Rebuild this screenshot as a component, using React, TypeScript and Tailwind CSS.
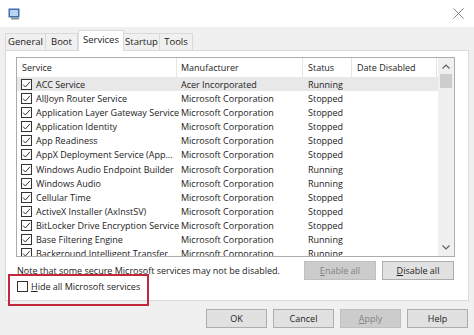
import React from "react";

const services = [
  ["ACC Service", "Acer Incorporated", "Running"],
  ["AllJoyn Router Service", "Microsoft Corporation", "Stopped"],
  ["Application Layer Gateway Service", "Microsoft Corporation", "Stopped"],
  ["Application Identity", "Microsoft Corporation", "Stopped"],
  ["App Readiness", "Microsoft Corporation", "Stopped"],
  ["AppX Deployment Service (App...", "Microsoft Corporation", "Stopped"],
  ["Windows Audio Endpoint Builder", "Microsoft Corporation", "Running"],
  ["Windows Audio", "Microsoft Corporation", "Running"],
  ["Cellular Time", "Microsoft Corporation", "Stopped"],
  ["ActiveX Installer (AxInstSV)", "Microsoft Corporation", "Stopped"],
  ["BitLocker Drive Encryption Service", "Microsoft Corporation", "Stopped"],
  ["Base Filtering Engine", "Microsoft Corporation", "Running"],
  ["Background Intelligent Transfer ...", "Microsoft Corporation", "Running"],
];

const tabs = [
  { label: "General", w: "w-[41px]" },
  { label: "Boot", w: "w-[33px]" },
  { label: "Services", w: "w-[46px]", active: true },
  { label: "Startup", w: "w-[37px]" },
  { label: "Tools", w: "w-[34px]" },
];

function CheckBox({ checked }: { checked?: boolean }) {
  return (
    <div className="flex h-[11px] w-[11px] shrink-0 items-center justify-center border border-[#333] bg-white">
      {checked && (
        <svg width="9" height="9" viewBox="0 0 9 9" fill="none">
          <path d="M1 4.6 L3.4 7 L8 1.8" stroke="#333" strokeWidth="1" />
        </svg>
      )}
    </div>
  );
}

function Button({
  children,
  disabled,
  className = "",
}: {
  children: React.ReactNode;
  disabled?: boolean;
  className?: string;
}) {
  return (
    <div
      className={`flex h-[19px] items-center justify-center border ${
        disabled
          ? "border-[#bfbfbf] bg-[#cccccc] text-[#838383]"
          : "border-[#adadad] bg-[#e1e1e1] text-[#222]"
      } ${className}`}
    >
      {children}
    </div>
  );
}

export default function App() {
  return (
    <div className="relative h-[335px] w-[474px] overflow-hidden bg-[#f0f0f0] font-['Open_Sans',sans-serif] text-[9px] leading-none text-[#222]">
      {/* title bar */}
      <div className="flex h-[27px] items-center justify-between bg-white pl-[8px] pr-[10px]">
        <svg width="12" height="12" viewBox="0 0 12 12">
          <rect x="0.5" y="0.5" width="11" height="9" fill="#3d6fb0" />
          <rect x="2" y="2" width="8" height="6" fill="#b9d4f0" />
          <rect x="3" y="9.5" width="8" height="2" fill="#8a8f96" />
        </svg>
        <svg width="11" height="11" viewBox="0 0 11 11">
          <path d="M0.5 0.5 L10.5 10.5 M10.5 0.5 L0.5 10.5" stroke="#777" strokeWidth="0.9" />
        </svg>
      </div>

      {/* tabs */}
      <div className="flex h-[23px] items-end pl-[5px] text-[9.5px]">
        {tabs.map((t) =>
          t.active ? (
            <div
              key={t.label}
              className={`relative z-10 -mb-px flex h-[21px] items-center justify-center border border-b-0 border-[#d9d9d9] bg-white pb-[2px] ${t.w}`}
            >
              {t.label}
            </div>
          ) : (
            <div
              key={t.label}
              className={`-ml-px flex h-[17px] items-center justify-center border border-b-0 border-[#d9d9d9] bg-[#f0f0f0] first:ml-0 ${t.w}`}
            >
              {t.label}
            </div>
          )
        )}
      </div>

      {/* panel */}
      <div className="mx-[5px] h-[251px] border border-[#d9d9d9] bg-white">
        <div className="ml-[10px] mt-[6px] flex h-[200px] w-[439px] overflow-hidden border border-[#acacac]">
          <div className="flex-1 overflow-hidden">
            <div className="flex h-[19px] items-center">
              <div className="flex h-full w-[160px] items-center border-r border-[#e5e5e5] pl-[5px]">
                Service
              </div>
              <div className="flex h-full w-[126px] items-center border-r border-[#e5e5e5] pl-[4px]">
                Manufacturer
              </div>
              <div className="flex h-full w-[49px] items-center border-r border-[#e5e5e5] pl-[5px]">
                Status
              </div>
              <div className="flex h-full w-[85px] items-center border-r border-[#e5e5e5] pl-[5px]">
                Date Disabled
              </div>
            </div>
            {services.map(([name, maker, status], i) => (
              <div
                key={name}
                className={`flex h-[14.17px] shrink-0 items-center leading-[13px] ${i === 0 ? "bg-[#e8e8e8]" : ""}`}
              >
                <div className="flex w-[160px] items-center gap-[4px] pl-[4px]">
                  <CheckBox checked />
                  <span className="whitespace-nowrap">{name}</span>
                </div>
                <div className="w-[126px] whitespace-nowrap pl-[4px]">{maker}</div>
                <div className="w-[49px] pl-[5px]">{status}</div>
              </div>
            ))}
          </div>
          {/* scrollbar */}
          <div className="flex w-[16px] flex-col items-center bg-[#f0f0f0]">
            <svg className="mt-[6px]" width="8" height="5" viewBox="0 0 8 5">
              <path d="M0.5 4.5 L4 1 L7.5 4.5" stroke="#606060" strokeWidth="1.2" fill="none" />
            </svg>
            <div className="mt-[5px] h-[14px] w-[12px] bg-[#cdcdcd]" />
            <svg className="mb-[6px] mt-auto" width="8" height="5" viewBox="0 0 8 5">
              <path d="M0.5 0.5 L4 4 L7.5 0.5" stroke="#606060" strokeWidth="1.2" fill="none" />
            </svg>
          </div>
        </div>

        <div className="mt-[4px] flex items-start">
          <div className="ml-[11px] mt-[5px] whitespace-nowrap">
            Note that some secure Microsoft services may not be disabled.
          </div>
          <div className="ml-auto mr-[14px] flex gap-[6px]">
            <Button disabled className="w-[72px]">
              <span>
                <span className="underline">E</span>nable all
              </span>
            </Button>
            <Button className="w-[72px]">
              <span>
                <span className="underline">D</span>isable all
              </span>
            </Button>
          </div>
        </div>

        <div className="ml-[11px] mt-[1px] flex items-center gap-[3px]">
          <CheckBox />
          <span>
            <span className="underline">H</span>ide all Microsoft services
          </span>
        </div>
      </div>

      {/* bottom buttons */}
      <div className="mt-[8px] flex justify-end gap-[6px] pr-[6px]">
        <Button className="w-[61px]">OK</Button>
        <Button className="w-[61px]">Cancel</Button>
        <Button disabled className="w-[61px]">
          <span>
            <span className="underline">A</span>pply
          </span>
        </Button>
        <Button className="w-[61px]">Help</Button>
      </div>

      {/* annotation */}
      <div className="absolute left-[8px] top-[274px] h-[32px] w-[141px] border-2 border-[#c1283a]" />
    </div>
  );
}
